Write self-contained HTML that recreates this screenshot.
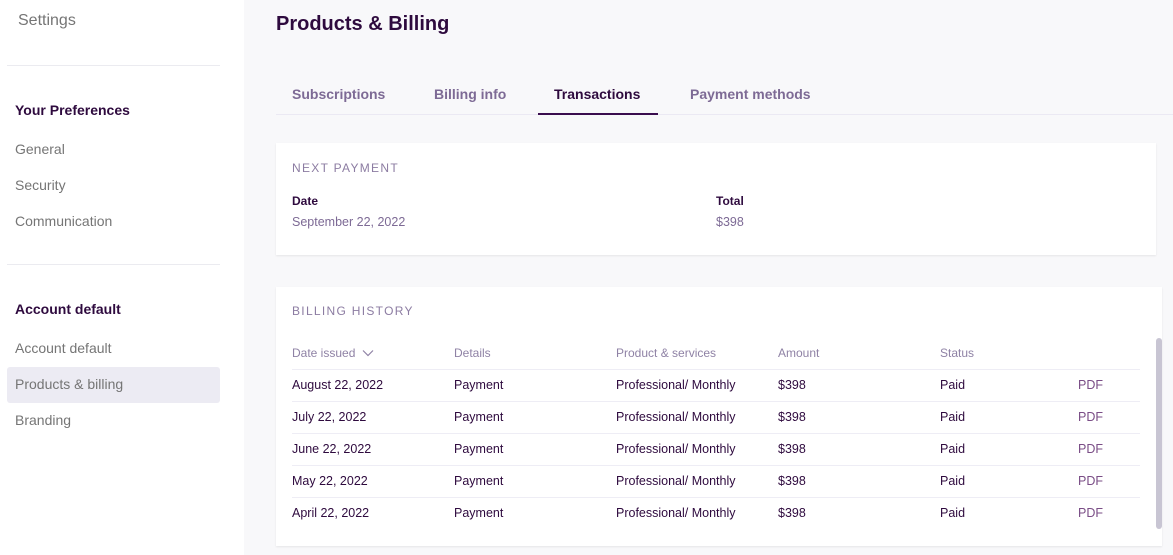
<!DOCTYPE html>
<html><head><meta charset="utf-8"><style>
*{margin:0;padding:0;box-sizing:border-box}
body{width:1173px;height:555px;overflow:hidden;background:#f8f8fa;font-family:"Liberation Sans",sans-serif;position:relative}
.abs{position:absolute;white-space:nowrap}
#side{position:absolute;left:0;top:0;width:244px;height:555px;background:#fff}
.hr{position:absolute;left:7px;width:213px;height:1px;background:#ebebf0}
.sh{font-size:14px;font-weight:bold;color:#2e0a3e;left:15px}
.si{font-size:14px;color:#757575;left:15px}
.tab{font-size:14px;font-weight:bold;color:#7d6a95;top:86px}
.card{position:absolute;background:#fff;box-shadow:0 1px 2px rgba(0,0,0,0.08)}
.cap{font-size:12px;letter-spacing:1.3px;color:#8c7ca2}
.th{font-size:12px;color:#8f82a5}
.td{font-size:12.5px;color:#2e0a3e}
.line{position:absolute;left:16px;width:848px;height:1px;background:#eeedf5}
</style></head><body>
<div id="side">
<div class="abs" style="left:18px;top:12px;font-size:16px;color:#757575">Settings</div>
<div class="hr" style="top:65px"></div>
<div class="abs sh" style="top:102px">Your Preferences</div>
<div class="abs si" style="top:141px">General</div>
<div class="abs si" style="top:177px">Security</div>
<div class="abs si" style="top:213px">Communication</div>
<div class="hr" style="top:264px"></div>
<div class="abs sh" style="top:301px">Account default</div>
<div class="abs si" style="top:340px">Account default</div>
<div style="position:absolute;left:7px;top:367px;width:213px;height:36px;background:#ecebf3;border-radius:3px"></div>
<div class="abs si" style="top:376px">Products &amp; billing</div>
<div class="abs si" style="top:412px">Branding</div>
</div>
<div class="abs" style="left:276px;top:13px;font-size:20px;font-weight:bold;color:#2e0a3e">Products &amp; Billing</div>
<div class="abs tab" style="left:292px">Subscriptions</div>
<div class="abs tab" style="left:434px">Billing info</div>
<div class="abs tab" style="left:554px;color:#2e0a3e">Transactions</div>
<div class="abs tab" style="left:690px">Payment methods</div>
<div style="position:absolute;left:276px;top:114px;width:897px;height:1px;background:#ebe9f3"></div>
<div style="position:absolute;left:538px;top:113px;width:120px;height:2px;background:#3a0d4e"></div>

<div class="card" style="left:276px;top:143px;width:880px;height:112px">
<div class="abs cap" style="left:16px;top:18px">NEXT PAYMENT</div>
<div class="abs" style="left:16px;top:51px;font-size:12px;font-weight:bold;color:#2e0a3e">Date</div>
<div class="abs" style="left:16px;top:72px;font-size:12.5px;color:#7d6a95">September 22, 2022</div>
<div class="abs" style="left:440px;top:51px;font-size:12px;font-weight:bold;color:#2e0a3e">Total</div>
<div class="abs" style="left:440px;top:72px;font-size:12.5px;color:#7d6a95">$398</div>
</div>

<div class="card" style="left:276px;top:287px;width:886px;height:259px">
<div class="abs cap" style="left:16px;top:17px">BILLING HISTORY</div>
<div class="abs th" style="left:16px;top:59px">Date issued <svg width="12" height="8" viewBox="0 0 12 8" style="margin-left:3px"><path d="M1 1.5L6 6.5L11 1.5" fill="none" stroke="#8f82a5" stroke-width="1.2"/></svg></div>
<div class="abs th" style="left:178px;top:59px">Details</div>
<div class="abs th" style="left:340px;top:59px">Product &amp; services</div>
<div class="abs th" style="left:502px;top:59px">Amount</div>
<div class="abs th" style="left:664px;top:59px">Status</div>
<div class="line" style="top:82px"></div>
<div class="line" style="top:114px"></div>
<div class="line" style="top:146px"></div>
<div class="line" style="top:178px"></div>
<div class="line" style="top:210px"></div>

<div class="abs td" style="left:16px;top:82px;line-height:32px">August 22, 2022<br>July 22, 2022<br>June 22, 2022<br>May 22, 2022<br>April 22, 2022</div>
<div class="abs td" style="left:178px;top:82px;line-height:32px">Payment<br>Payment<br>Payment<br>Payment<br>Payment</div>
<div class="abs td" style="left:340px;top:82px;line-height:32px">Professional/ Monthly<br>Professional/ Monthly<br>Professional/ Monthly<br>Professional/ Monthly<br>Professional/ Monthly</div>
<div class="abs td" style="left:502px;top:82px;line-height:32px">$398<br>$398<br>$398<br>$398<br>$398</div>
<div class="abs td" style="left:664px;top:82px;line-height:32px">Paid<br>Paid<br>Paid<br>Paid<br>Paid</div>
<div class="abs td" style="left:802px;top:82px;line-height:32px;color:#7a4d86">PDF<br>PDF<br>PDF<br>PDF<br>PDF</div>
<div style="position:absolute;left:880px;top:51px;width:6px;height:191px;background:#c8c5d3;border-radius:3px"></div>
</div>
</body></html>
